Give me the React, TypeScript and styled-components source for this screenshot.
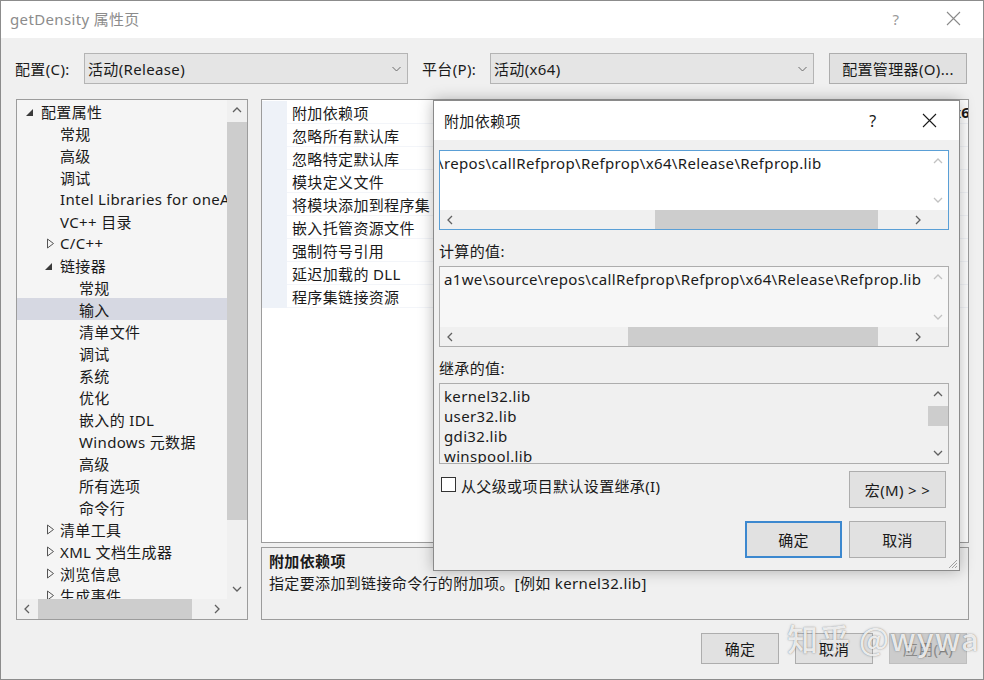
import styled, { createGlobalStyle } from "styled-components"

const FONT = `"Noto Sans", "Noto Sans CJK SC", sans-serif`

const GlobalStyle = createGlobalStyle`
    html, body {
        margin: 0;
        padding: 0;
        background: #f0f0f0;
    }
    body {
        font-family: ${FONT};
        font-size: 15px;
        letter-spacing: 0.35px;
        color: #1a1a1a;
    }
    * {
        box-sizing: border-box;
    }
`

type Dir = "up" | "down" | "left" | "right"

const chevronPoints: Record<Dir, string> = {
    up: "1,7 5,3 9,7",
    down: "1,3 5,7 9,3",
    left: "7,1 3,5 7,9",
    right: "3,1 7,5 3,9",
}

function Chevron({ dir, color = "#606060" }: { dir: Dir; color?: string }) {
    return (
        <svg width="10" height="10" viewBox="0 0 10 10">
            <polyline points={chevronPoints[dir]} fill="none" stroke={color} strokeWidth="1.3" />
        </svg>
    )
}

function ComboArrow() {
    return (
        <svg width="9" height="6" viewBox="0 0 9 6">
            <polyline points="0.5,1 4.5,5 8.5,1" fill="none" stroke="#6a6a6a" strokeWidth="1" />
        </svg>
    )
}

function CloseIcon({ color }: { color: string }) {
    return (
        <svg width="15" height="15" viewBox="0 0 15 15">
            <path d="M1 1 L14 14 M14 1 L1 14" stroke={color} strokeWidth="1.1" fill="none" />
        </svg>
    )
}

function Expander({ open }: { open: boolean }) {
    return open ? (
        <svg width="9" height="9" viewBox="0 0 9 9">
            <polygon points="8,1 8,8 1,8" fill="#3a3a3a" />
        </svg>
    ) : (
        <svg width="9" height="11" viewBox="0 0 9 11">
            <polygon points="1.5,1 7.5,5.5 1.5,10" fill="none" stroke="#555" strokeWidth="1" />
        </svg>
    )
}

/* ---------- scrollbars ---------- */

interface VScrollProps {
    thumb?: [number, number]
    disabled?: boolean
    bg?: string
}

function VScroll({ thumb, disabled, bg }: VScrollProps) {
    const c = disabled ? "#c2c2c2" : "#606060"
    return (
        <VBar $bg={bg}>
            <ArrowBox>
                <Chevron dir="up" color={c} />
            </ArrowBox>
            <VTrack>{thumb && <VThumb $offset={thumb[0]} $size={thumb[1]} />}</VTrack>
            <ArrowBox>
                <Chevron dir="down" color={c} />
            </ArrowBox>
        </VBar>
    )
}

function HScroll({ thumb, bg }: { thumb: [number, number]; bg?: string }) {
    return (
        <HBar $bg={bg}>
            <ArrowBox>
                <Chevron dir="left" />
            </ArrowBox>
            <HTrack>
                <HThumb $offset={thumb[0]} $size={thumb[1]} />
            </HTrack>
            <ArrowBox>
                <Chevron dir="right" />
            </ArrowBox>
        </HBar>
    )
}

/* ---------- data ---------- */

interface TreeItem {
    label: string
    level: number
    open?: boolean
    selected?: boolean
}

const treeItems: TreeItem[] = [
    { label: "配置属性", level: 0, open: true },
    { label: "常规", level: 1 },
    { label: "高级", level: 1 },
    { label: "调试", level: 1 },
    { label: "Intel Libraries for oneAPI", level: 1 },
    { label: "VC++ 目录", level: 1 },
    { label: "C/C++", level: 1, open: false },
    { label: "链接器", level: 1, open: true },
    { label: "常规", level: 2 },
    { label: "输入", level: 2, selected: true },
    { label: "清单文件", level: 2 },
    { label: "调试", level: 2 },
    { label: "系统", level: 2 },
    { label: "优化", level: 2 },
    { label: "嵌入的 IDL", level: 2 },
    { label: "Windows 元数据", level: 2 },
    { label: "高级", level: 2 },
    { label: "所有选项", level: 2 },
    { label: "命令行", level: 2 },
    { label: "清单工具", level: 1, open: false },
    { label: "XML 文档生成器", level: 1, open: false },
    { label: "浏览信息", level: 1, open: false },
    { label: "生成事件", level: 1, open: false },
]

const properties = [
    { name: "附加依赖项", value: "C:\\Users\\wa1we\\source\\repos\\callRefprop\\Refprop\\x64\\Release\\Refprop.lib;%(AdditionalDependencies)", bold: true },
    { name: "忽略所有默认库", value: "" },
    { name: "忽略特定默认库", value: "" },
    { name: "模块定义文件", value: "" },
    { name: "将模块添加到程序集", value: "" },
    { name: "嵌入托管资源文件", value: "" },
    { name: "强制符号引用", value: "" },
    { name: "延迟加载的 DLL", value: "" },
    { name: "程序集链接资源", value: "" },
]

const inherited = ["kernel32.lib", "user32.lib", "gdi32.lib", "winspool.lib", "comdlg32.lib"]

/* ---------- app ---------- */

export default function App() {
    return (
        <>
            <GlobalStyle />
            <Window>
                <TitleBar>
                    <WindowTitle>getDensity 属性页</WindowTitle>
                    <TitleHelp>?</TitleHelp>
                    <TitleClose>
                        <CloseIcon color="#8a8a8a" />
                    </TitleClose>
                </TitleBar>

                <ConfigRow>
                    <FieldLabel $w={69}>配置(C):</FieldLabel>
                    <Combo>
                        <span>活动(Release)</span>
                        <ComboArrow />
                    </Combo>
                    <FieldLabel $w={68} $ml={14}>平台(P):</FieldLabel>
                    <Combo>
                        <span>活动(x64)</span>
                        <ComboArrow />
                    </Combo>
                    <Button $w={138} $h={31} $ml={15}>配置管理器(O)...</Button>
                </ConfigRow>

                <Main>
                    <TreePanel>
                        <TreeList>
                            {treeItems.map((item, i) => (
                                <TreeRow key={i} $level={item.level} $selected={item.selected}>
                                    <ExpanderBox $open={item.open}>
                                        {item.open !== undefined && <Expander open={item.open} />}
                                    </ExpanderBox>
                                    <TreeText>{item.label}</TreeText>
                                </TreeRow>
                            ))}
                        </TreeList>
                        <VScroll thumb={[2, 398]} />
                        <HScroll thumb={[1, 154]} />
                        <Corner />
                    </TreePanel>

                    <RightColumn>
                        <PropertyGrid>
                            {properties.map((p, i) => (
                                <PropRow key={i}>
                                    <PropMargin />
                                    <PropName>{p.name}</PropName>
                                    <PropValue $bold={p.bold}>{p.value}</PropValue>
                                </PropRow>
                            ))}
                        </PropertyGrid>
                        <Description>
                            <DescTitle>附加依赖项</DescTitle>
                            <DescText>指定要添加到链接命令行的附加项。[例如 kernel32.lib]</DescText>
                        </Description>
                    </RightColumn>
                </Main>

                <Footer>
                    <Button $w={78} $h={31}>确定</Button>
                    <Button $w={78} $h={31}>取消</Button>
                    <Button $w={78} $h={31} $disabled>应用(A)</Button>
                </Footer>

                <Dialog>
                    <DialogTitleBar>
                        <DialogTitle>附加依赖项</DialogTitle>
                        <DialogHelp>?</DialogHelp>
                        <DialogClose>
                            <CloseIcon color="#1a1a1a" />
                        </DialogClose>
                    </DialogTitleBar>
                    <DialogBody>
                        <EditBox $focused>
                            <EditText>
                                <Scrolled $shift={-6}>\repos\callRefprop\Refprop\x64\Release\Refprop.lib</Scrolled>
                            </EditText>
                            <VScroll disabled bg="#ffffff" />
                            <HScroll thumb={[195, 223]} />
                            <Corner $bg="#f0f0f0" />
                        </EditBox>

                        <SectionLabel>计算的值:</SectionLabel>
                        <EditBox $bg="#f7f7f7">
                            <EditText>a1we\source\repos\callRefprop\Refprop\x64\Release\Refprop.lib</EditText>
                            <VScroll disabled bg="#f7f7f7" />
                            <HScroll thumb={[168, 250]} />
                            <Corner $bg="#f0f0f0" />
                        </EditBox>

                        <SectionLabel>继承的值:</SectionLabel>
                        <ListBox>
                            <ListItems>
                                {inherited.map((lib) => (
                                    <ListItem key={lib}>{lib}</ListItem>
                                ))}
                            </ListItems>
                            <VScroll thumb={[2, 20]} />
                        </ListBox>

                        <CheckRow>
                            <CheckBox />
                            <CheckLabel>从父级或项目默认设置继承(I)</CheckLabel>
                            <Button $w={97} $h={37} $ml="auto" $mr={3}>宏(M) &gt; &gt;</Button>
                        </CheckRow>

                        <DialogButtons>
                            <Button $w={97} $h={37} $default>确定</Button>
                            <Button $w={97} $h={37}>取消</Button>
                        </DialogButtons>
                    </DialogBody>
                    <Grip>
                        <svg width="11" height="11" viewBox="0 0 11 11">
                            <path d="M10 2 L2 10 M10 5 L5 10 M10 8 L8 10" stroke="#a0a0a0" strokeWidth="1" />
                        </svg>
                    </Grip>
                </Dialog>

                <Watermark>知乎 @wywa</Watermark>
            </Window>
        </>
    )
}

/* ---------- styles ---------- */

const Window = styled.div`
    position: relative;
    width: 984px;
    height: 680px;
    overflow: hidden;
    display: flex;
    flex-direction: column;
    background: #f0f0f0;
    border: 1px solid #8c8c8c;
`

const TitleBar = styled.div`
    height: 37px;
    flex: none;
    display: flex;
    align-items: center;
    background: #ffffff;
    padding: 0 0 2px 9px;
`

const WindowTitle = styled.div`
    flex: 1;
    font-size: 15px;
    color: #8c8c8c;
`

const TitleHelp = styled.div`
    width: 30px;
    text-align: center;
    font-size: 15px;
    color: #9a9a9a;
    margin-right: 19px;
`

const TitleClose = styled.div`
    width: 46px;
    display: flex;
    justify-content: center;
    margin-right: 7px;
`

const ConfigRow = styled.div`
    flex: none;
    display: flex;
    align-items: center;
    height: 31px;
    margin-top: 15px;
    padding-left: 14px;
`

const FieldLabel = styled.div<{ $w: number; $ml?: number }>`
    width: ${(p) => p.$w}px;
    margin-left: ${(p) => p.$ml ?? 0}px;
    font-size: 15px;
    color: #1a1a1a;
`

const Combo = styled.div`
    width: 324px;
    height: 31px;
    display: flex;
    align-items: center;
    justify-content: space-between;
    padding: 0 6px 0 3px;
    background: #e5e5e5;
    border: 1px solid #b4b4b4;
    font-size: 15px;
`

const Button = styled.div<{
    $w: number
    $h: number
    $ml?: number | "auto"
    $mr?: number
    $default?: boolean
    $disabled?: boolean
}>`
    flex: none;
    width: ${(p) => p.$w}px;
    height: ${(p) => p.$h}px;
    margin-left: ${(p) => (p.$ml === "auto" ? "auto" : `${p.$ml ?? 0}px`)};
    margin-right: ${(p) => p.$mr ?? 0}px;
    display: flex;
    align-items: center;
    justify-content: center;
    font-size: 15px;
    white-space: nowrap;
    color: ${(p) => (p.$disabled ? "#8a8a8a" : "#1a1a1a")};
    background: ${(p) => (p.$disabled ? "#cccccc" : "#e1e1e1")};
    border: ${(p) => (p.$default ? "2px solid #3c88cf" : p.$disabled ? "1px solid #bfbfbf" : "1px solid #adadad")};
`

const Main = styled.div`
    flex: none;
    display: flex;
    margin-top: 15px;
    padding-left: 15px;
`

const TreePanel = styled.div`
    width: 232px;
    height: 521px;
    border: 1px solid #9c9c9c;
    background: #f5f5f5;
    display: grid;
    grid-template-columns: 1fr 20px;
    grid-template-rows: 1fr 20px;
`

const TreeList = styled.div`
    overflow: hidden;
`

const TreeRow = styled.div<{ $level: number; $selected?: boolean }>`
    height: 22px;
    display: flex;
    align-items: center;
    padding-left: ${(p) => 8 + p.$level * 19}px;
    background: ${(p) => (p.$selected ? "#d6d8e2" : "transparent")};
    white-space: nowrap;
`

const ExpanderBox = styled.div<{ $open?: boolean }>`
    width: 16px;
    flex: none;
    display: flex;
    align-items: center;
    padding-top: ${(p) => (p.$open ? 2 : 0)}px;
    padding-left: ${(p) => (p.$open ? 0 : 2)}px;
`

const TreeText = styled.span`
    font-size: 15px;
    color: #1a1a1a;
`

const VBar = styled.div<{ $bg?: string }>`
    width: 20px;
    display: flex;
    flex-direction: column;
    background: ${(p) => p.$bg ?? "#f0f0f0"};
`

const HBar = styled.div<{ $bg?: string }>`
    display: flex;
    background: ${(p) => p.$bg ?? "#f0f0f0"};
`

const ArrowBox = styled.div`
    flex: none;
    width: 20px;
    height: 20px;
    display: flex;
    align-items: center;
    justify-content: center;
`

const VTrack = styled.div`
    flex: 1;
    min-height: 0;
`

const HTrack = styled.div`
    flex: 1;
    display: flex;
`

const VThumb = styled.div<{ $offset: number; $size: number }>`
    margin-top: ${(p) => p.$offset}px;
    height: ${(p) => p.$size}px;
    background: #cdcdcd;
`

const HThumb = styled.div<{ $offset: number; $size: number }>`
    margin-left: ${(p) => p.$offset}px;
    width: ${(p) => p.$size}px;
    background: #cdcdcd;
`

const Corner = styled.div<{ $bg?: string }>`
    background: ${(p) => p.$bg ?? "#f0f0f0"};
`

const RightColumn = styled.div`
    margin-left: 13px;
    display: flex;
    flex-direction: column;
`

const PropertyGrid = styled.div`
    width: 708px;
    height: 444px;
    padding-top: 1px;
    border: 1px solid #9c9c9c;
    background: #ffffff;
    overflow: hidden;
`

const PropRow = styled.div`
    height: 23px;
    display: flex;
    align-items: stretch;
`

const PropMargin = styled.div`
    width: 25px;
    flex: none;
    background: #eef2f8;
`

const PropName = styled.div`
    width: 264px;
    flex: none;
    padding-left: 5px;
    display: flex;
    align-items: center;
    font-size: 15px;
    border-bottom: 1px solid #f3f5f9;
`

const PropValue = styled.div<{ $bold?: boolean }>`
    flex: 1;
    min-width: 0;
    padding-left: 13px;
    display: flex;
    align-items: center;
    white-space: nowrap;
    overflow: hidden;
    font-size: 15px;
    letter-spacing: 0;
    font-weight: ${(p) => (p.$bold ? 700 : 400)};
    border-bottom: 1px solid #f3f5f9;
    border-left: 1px solid #f0f0f0;
`

const Description = styled.div`
    width: 708px;
    height: 73px;
    margin-top: 4px;
    padding: 2px 7px;
    border: 1px solid #9c9c9c;
    background: #f0f0f0;
`

const DescTitle = styled.div`
    line-height: 22px;
    font-weight: 700;
    font-size: 15px;
`

const DescText = styled.div`
    line-height: 22px;
    font-size: 15px;
`

const Footer = styled.div`
    flex: none;
    display: flex;
    justify-content: flex-end;
    gap: 16px;
    margin-top: 13px;
    padding-right: 16px;
`

const Dialog = styled.div`
    position: absolute;
    left: 432px;
    top: 99px;
    width: 527px;
    height: 471px;
    display: flex;
    flex-direction: column;
    background: #f0f0f0;
    border: 1px solid #8a8a8a;
    box-shadow: 0 0 14px rgba(0, 0, 0, 0.28);
`

const DialogTitleBar = styled.div`
    height: 39px;
    flex: none;
    display: flex;
    align-items: center;
    background: #ffffff;
    padding-left: 10px;
`

const DialogTitle = styled.div`
    flex: 1;
    font-size: 15px;
    color: #1a1a1a;
`

const DialogHelp = styled.div`
    width: 40px;
    text-align: center;
    font-size: 16px;
    color: #1a1a1a;
    margin-right: 13px;
`

const DialogClose = styled.div`
    width: 46px;
    display: flex;
    justify-content: center;
    margin-right: 7px;
`

const DialogBody = styled.div`
    flex: 1;
    display: flex;
    flex-direction: column;
    padding: 10px 10px 0 5px;
`

const EditBox = styled.div<{ $focused?: boolean; $bg?: string }>`
    height: ${(p) => (p.$focused ? 80 : 81)}px;
    flex: none;
    display: grid;
    grid-template-columns: 1fr 20px;
    grid-template-rows: 1fr 19px;
    border: 1px solid ${(p) => (p.$focused ? "#5a9fd6" : "#adadad")};
    background: ${(p) => p.$bg ?? "#ffffff"};
`

const EditText = styled.div`
    padding: 2px 4px;
    line-height: 20px;
    font-size: 15px;
    white-space: nowrap;
    overflow: hidden;
    color: #1a1a1a;
`

const Scrolled = styled.span<{ $shift: number }>`
    display: inline-block;
    margin-left: ${(p) => p.$shift}px;
`

const SectionLabel = styled.div`
    margin-top: 11px;
    margin-bottom: 5px;
    line-height: 20px;
    height: 20px;
    font-size: 15px;
    color: #1a1a1a;
`

const ListBox = styled.div`
    height: 81px;
    flex: none;
    display: grid;
    grid-template-columns: 1fr 20px;
    border: 1px solid #adadad;
    background: #f0f0f0;
`

const ListItems = styled.div`
    padding: 2px 4px;
    overflow: hidden;
`

const ListItem = styled.div`
    line-height: 20px;
    font-size: 15px;
    color: #1a1a1a;
`

const CheckRow = styled.div`
    margin-top: 7px;
    height: 37px;
    flex: none;
    display: flex;
    align-items: flex-start;
`

const CheckBox = styled.div`
    width: 15px;
    height: 15px;
    margin-top: 6px;
    margin-left: 2px;
    border: 1px solid #333333;
    background: #ffffff;
`

const CheckLabel = styled.div`
    margin-top: 5px;
    margin-left: 5px;
    line-height: 20px;
    font-size: 15px;
`

const DialogButtons = styled.div`
    margin-top: 13px;
    display: flex;
    justify-content: flex-end;
    gap: 7px;
    padding-right: 3px;
`

const Grip = styled.div`
    position: absolute;
    right: 1px;
    bottom: 1px;
    width: 11px;
    height: 11px;
    display: flex;
`

const Watermark = styled.div`
    position: absolute;
    left: 786px;
    top: 614px;
    font-family: "Noto Sans CJK SC", "Noto Sans", sans-serif;
    font-size: 31px;
    font-weight: 500;
    letter-spacing: 1px;
    color: rgba(255, 255, 255, 0.85);
    text-shadow: 0 0 1px rgba(0, 0, 0, 0.4), 0 0 3px rgba(0, 0, 0, 0.18);
    white-space: nowrap;
`
